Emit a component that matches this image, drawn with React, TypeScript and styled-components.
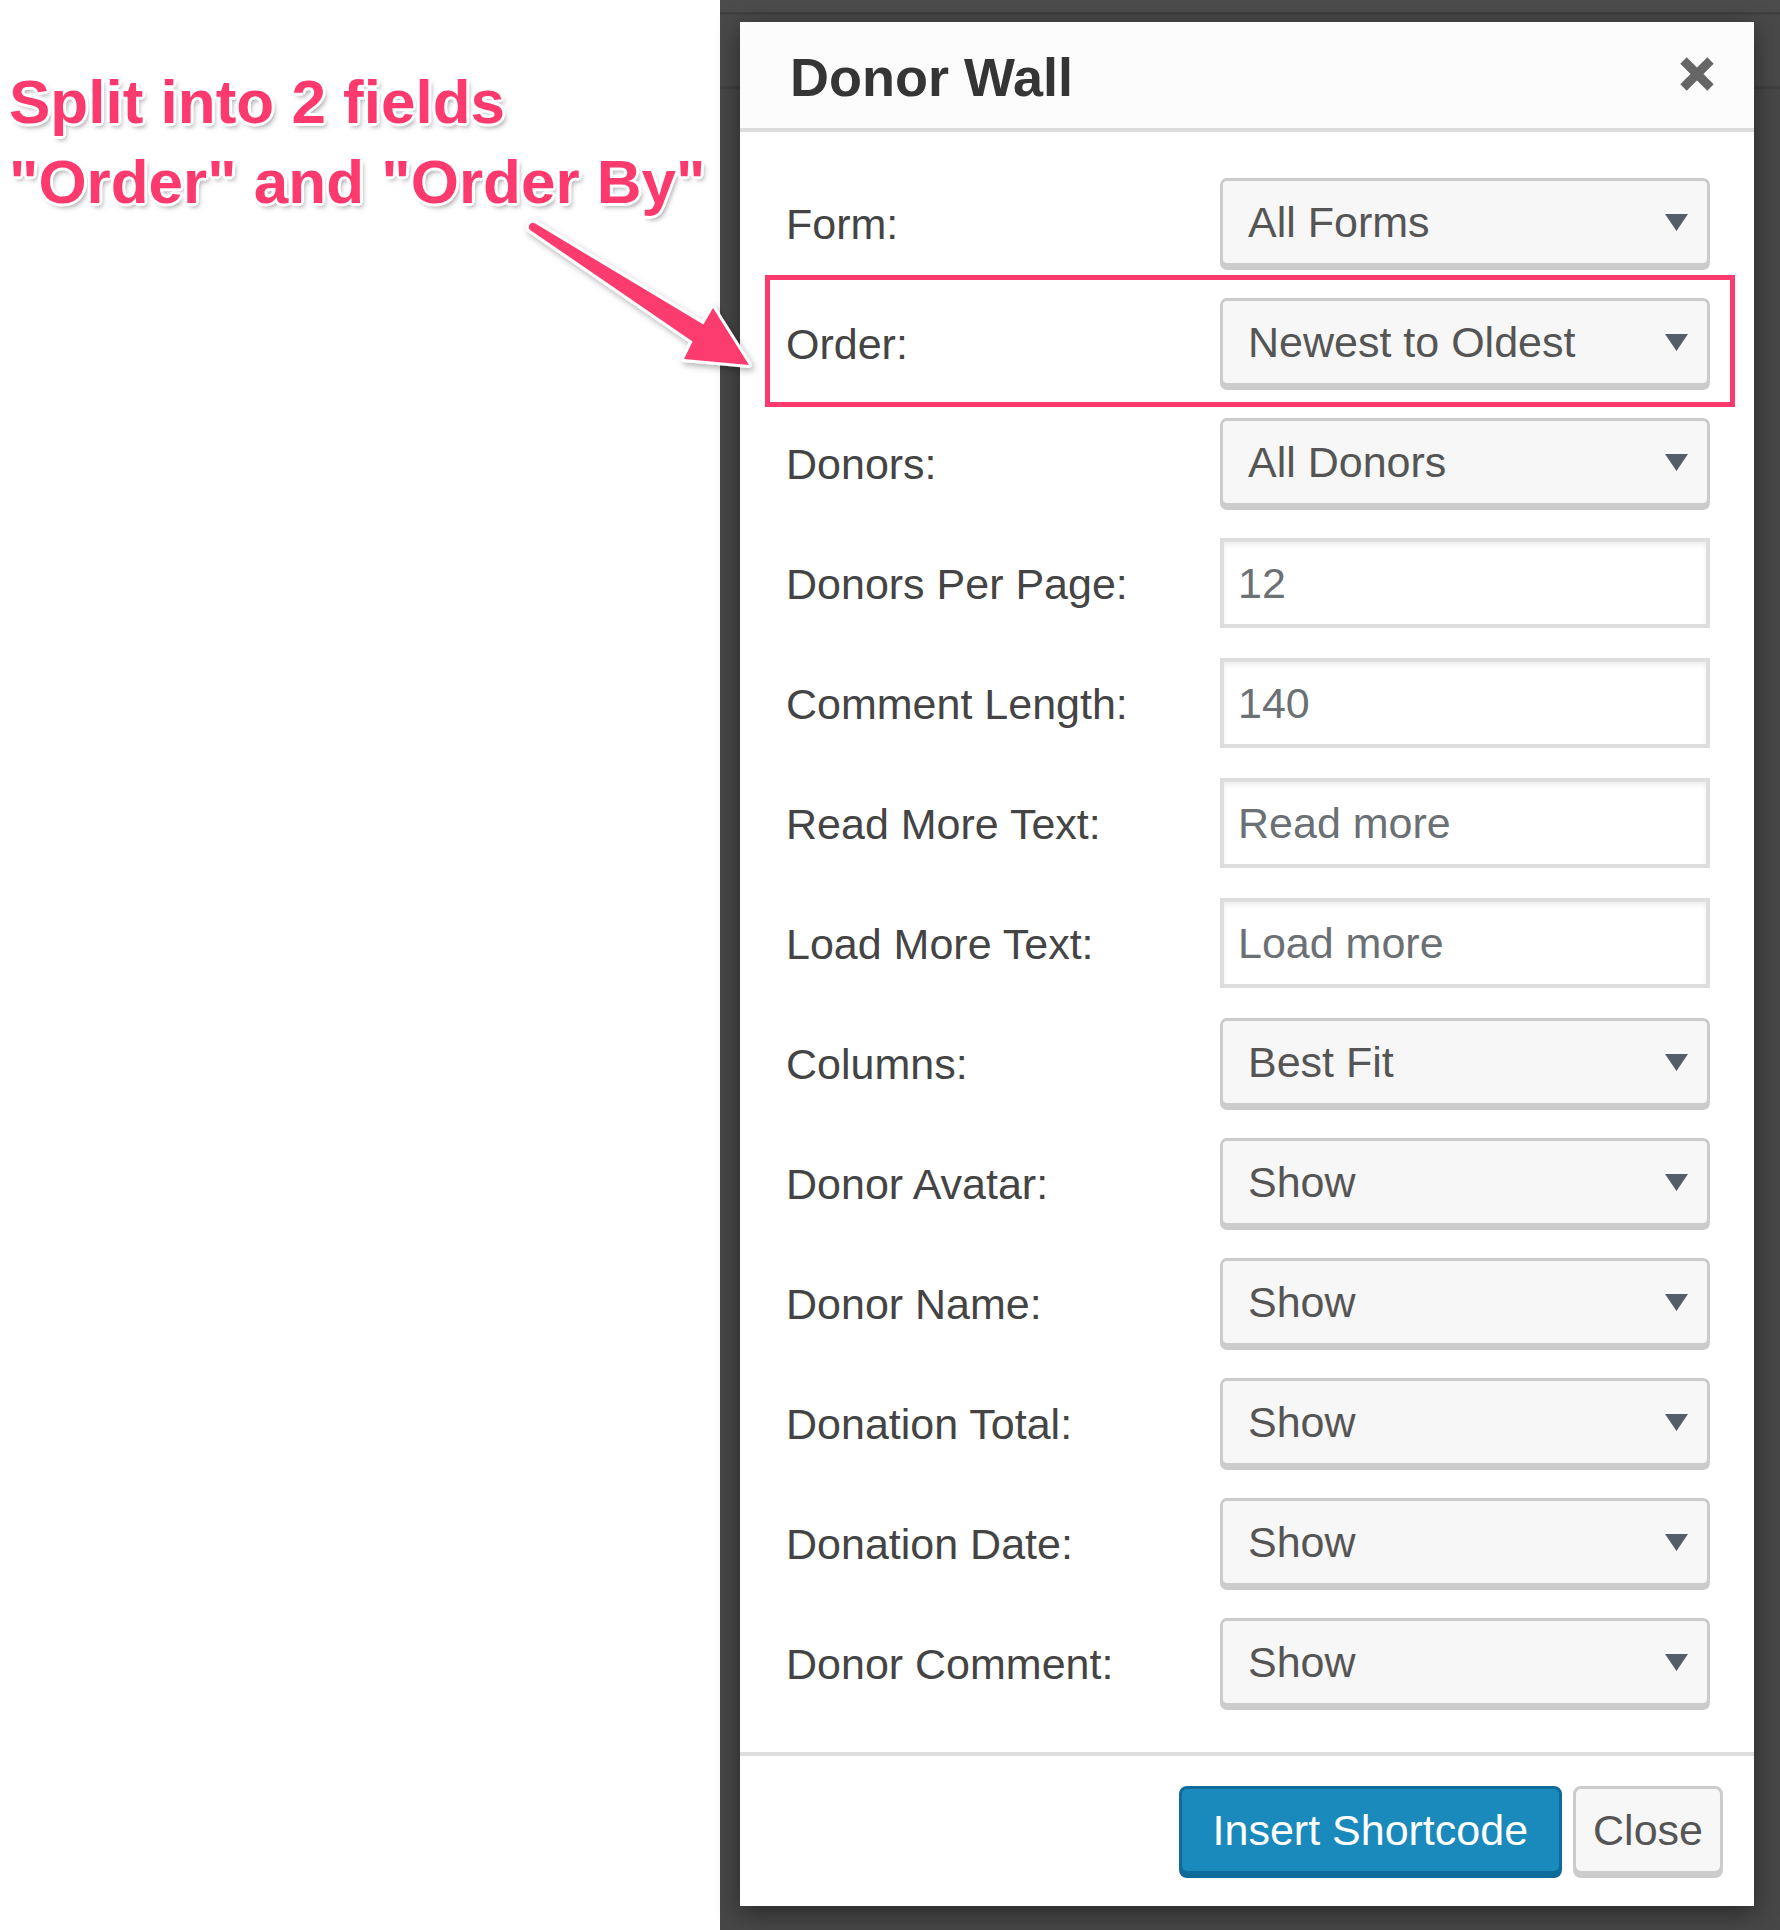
import React from 'react'
import styled, { createGlobalStyle } from 'styled-components'

const GlobalStyle = createGlobalStyle`
  html, body {
    margin: 0;
    padding: 0;
    background: #fff;
  }
  body {
    font-family: "Liberation Sans", Arial, sans-serif;
  }
  * {
    box-sizing: border-box;
  }
`

const Page = styled.div`
  position: relative;
  display: flex;
  width: 1780px;
  height: 1930px;
  background: #fff;
  overflow: hidden;
`

const NoteColumn = styled.div`
  width: 720px;
  flex-shrink: 0;
  padding: 62px 0 0 9px;
`

const Note = styled.div`
  font-size: 62px;
  line-height: 80px;
  font-weight: bold;
  color: #fc3a6e;
  white-space: nowrap;
  text-shadow:
    3px 0 0 #fff, -3px 0 0 #fff, 0 3px 0 #fff, 0 -3px 0 #fff,
    2px 2px 0 #fff, -2px 2px 0 #fff, 2px -2px 0 #fff, -2px -2px 0 #fff,
    3px 4px 5px rgba(0, 0, 0, 0.35);
`

const ArrowLayer = styled.svg`
  position: absolute;
  left: 0;
  top: 0;
  pointer-events: none;
  z-index: 5;
`

const Backdrop = styled.div`
  flex: 1;
  padding: 22px 26px 24px 20px;
  background: linear-gradient(
    to bottom,
    #4c4c4c 0,
    #4c4c4c 12px,
    #3e3e3e 12px,
    #424242 15px,
    #494949 15px,
    #494949 86px,
    #404040 86px,
    #404040 89px,
    #474747 89px
  );
`

const Modal = styled.div`
  display: flex;
  flex-direction: column;
  width: 1014px;
  height: 1884px;
  background: #fff;
  box-shadow: 0 6px 24px rgba(0, 0, 0, 0.45);
`

const Header = styled.div`
  display: flex;
  align-items: center;
  justify-content: space-between;
  height: 110px;
  padding: 4px 40px 0 50px;
  background: #fcfcfc;
  border-bottom: 4px solid #dcdcdc;
`

const Title = styled.h1`
  margin: 0;
  font-size: 54px;
  line-height: 1;
  font-weight: bold;
  color: #353535;
`

const CloseX = styled.button`
  display: flex;
  padding: 0;
  margin-top: -6px;
  border: 0;
  background: none;
  cursor: pointer;
`

const Body = styled.div`
  display: grid;
  gap: 28px;
  padding: 46px 44px 42px 46px;
`

const Row = styled.div`
  position: relative;
  display: grid;
  grid-template-columns: 434px 490px;
  align-items: center;
  height: 92px;
`

const Label = styled.label`
  font-size: 43px;
  color: #444;
`

const SelectBox = styled.div`
  align-self: start;
  display: flex;
  align-items: center;
  justify-content: space-between;
  height: 88px;
  padding: 0 19px 0 25px;
  font-size: 43px;
  color: #555;
  background: #f7f7f7;
  border: 3px solid #ccc;
  border-radius: 7px;
  box-shadow: 0 4px 0 #ccc;
`

const TextInput = styled.input`
  align-self: start;
  width: 490px;
  height: 90px;
  padding: 0 14px;
  font-family: "Liberation Sans", Arial, sans-serif;
  font-size: 43px;
  color: #6b7075;
  background: #fff;
  border: 4px solid #ddd;
  border-radius: 0;
  outline: none;
  box-shadow: inset 0 3px 5px rgba(0, 0, 0, 0.07);
`

const Highlight = styled.div`
  position: absolute;
  top: -23px;
  left: -21px;
  right: -25px;
  bottom: -17px;
  border: 5px solid #fc3a6e;
  pointer-events: none;
`

const Footer = styled.div`
  display: flex;
  justify-content: flex-end;
  gap: 11px;
  padding: 30px 31px 32px;
  border-top: 4px solid #ddd;
`

const Button = styled.button<{ $primary?: boolean }>`
  height: 88px;
  padding: ${(p) => (p.$primary ? '0 31px' : '0 17px')};
  font-family: "Liberation Sans", Arial, sans-serif;
  font-size: 43px;
  color: ${(p) => (p.$primary ? '#fff' : '#555')};
  background: ${(p) => (p.$primary ? '#1a89bb' : '#f7f7f7')};
  border: 3px solid ${(p) => (p.$primary ? '#0e6c9c' : '#ccc')};
  border-radius: 8px;
  box-shadow: 0 4px 0 ${(p) => (p.$primary ? '#0f6a99' : '#ccc')};
  cursor: pointer;
`

const Caret = () => (
  <svg width="23" height="17" viewBox="0 0 23 17">
    <polygon points="0,0 23,0 11.5,17" fill="#555d66" />
  </svg>
)

type Field = { label: string; value: string; kind: 'select' | 'input'; marked?: boolean }

const fields: Field[] = [
  { label: 'Form:', value: 'All Forms', kind: 'select' },
  { label: 'Order:', value: 'Newest to Oldest', kind: 'select', marked: true },
  { label: 'Donors:', value: 'All Donors', kind: 'select' },
  { label: 'Donors Per Page:', value: '12', kind: 'input' },
  { label: 'Comment Length:', value: '140', kind: 'input' },
  { label: 'Read More Text:', value: 'Read more', kind: 'input' },
  { label: 'Load More Text:', value: 'Load more', kind: 'input' },
  { label: 'Columns:', value: 'Best Fit', kind: 'select' },
  { label: 'Donor Avatar:', value: 'Show', kind: 'select' },
  { label: 'Donor Name:', value: 'Show', kind: 'select' },
  { label: 'Donation Total:', value: 'Show', kind: 'select' },
  { label: 'Donation Date:', value: 'Show', kind: 'select' },
  { label: 'Donor Comment:', value: 'Show', kind: 'select' },
]

const arrowShape =
  'M535.2,223.6 L703.4,324.6 L713,308 L749,365 L684,359 L692.6,341.4 L530.8,230.4 A4,4 0 0 1 535.2,223.6 Z'

export default function App() {
  return (
    <>
      <GlobalStyle />
      <Page>
        <NoteColumn>
          <Note>Split into 2 fields</Note>
          <Note>"Order" and "Order By"</Note>
        </NoteColumn>

        <ArrowLayer width="800" height="420" viewBox="0 0 800 420">
          <defs>
            <filter id="arrowShadow" x="-20%" y="-20%" width="140%" height="140%">
              <feDropShadow dx="2" dy="3" stdDeviation="3" floodColor="#000" floodOpacity="0.3" />
            </filter>
          </defs>
          <g filter="url(#arrowShadow)">
            <path d={arrowShape} fill="#fff" stroke="#fff" strokeWidth="6" strokeLinejoin="round" />
            <path d={arrowShape} fill="#fc3a6e" />
          </g>
        </ArrowLayer>

        <Backdrop>
          <Modal>
            <Header>
              <Title>Donor Wall</Title>
              <CloseX aria-label="Close">
                <svg width="34" height="34" viewBox="0 0 34 34">
                  <line x1="3.5" y1="3.5" x2="30.5" y2="30.5" stroke="#666" strokeWidth="9" />
                  <line x1="30.5" y1="3.5" x2="3.5" y2="30.5" stroke="#666" strokeWidth="9" />
                </svg>
              </CloseX>
            </Header>

            <Body>
              {fields.map((f) => (
                <Row key={f.label}>
                  <Label>{f.label}</Label>
                  {f.kind === 'select' ? (
                    <SelectBox>
                      <span>{f.value}</span>
                      <Caret />
                    </SelectBox>
                  ) : (
                    <TextInput type="text" value={f.value} readOnly />
                  )}
                  {f.marked && <Highlight />}
                </Row>
              ))}
            </Body>

            <Footer>
              <Button $primary>Insert Shortcode</Button>
              <Button>Close</Button>
            </Footer>
          </Modal>
        </Backdrop>
      </Page>
    </>
  )
}
